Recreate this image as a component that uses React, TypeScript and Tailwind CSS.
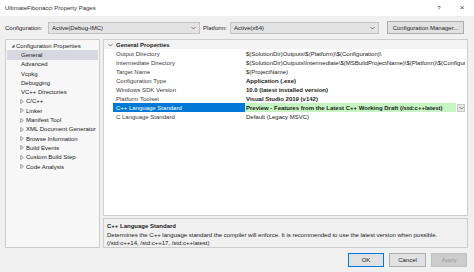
import React from "react";

const Chevron = ({ className = "" }: { className?: string }) => (
  <svg width="5" height="4" viewBox="0 0 5 4" className={className}>
    <path d="M0.5 1 L2.5 3 L4.5 1" stroke="#606060" strokeWidth="0.8" fill="none" />
  </svg>
);

const TriOpen = () => (
  <svg width="4" height="4" viewBox="0 0 4 4">
    <path d="M3.5 0.5 L3.5 3.5 L0.5 3.5 Z" fill="#444" />
  </svg>
);

const TriClosed = () => (
  <svg width="4" height="5" viewBox="0 0 4 5">
    <path d="M0.7 0.5 L3.3 2.5 L0.7 4.5 Z" stroke="#666" strokeWidth="0.6" fill="none" />
  </svg>
);

const treeLeaves = ["General", "Advanced", "Vcpkg", "Debugging", "VC++ Directories"];
const treeNodes = [
  "C/C++",
  "Linker",
  "Manifest Tool",
  "XML Document Generator",
  "Browse Information",
  "Build Events",
  "Custom Build Step",
  "Code Analysis",
];

const props: { label: string; value: string; bold?: boolean; selected?: boolean }[] = [
  { label: "Output Directory", value: "$(SolutionDir)Outputs\\$(Platform)\\$(Configuration)\\" },
  {
    label: "Intermediate Directory",
    value: "$(SolutionDir)Outputs\\Intermediate\\$(MSBuildProjectName)\\$(Platform)\\$(Configuration)\\",
  },
  { label: "Target Name", value: "$(ProjectName)" },
  { label: "Configuration Type", value: "Application (.exe)", bold: true },
  { label: "Windows SDK Version", value: "10.0 (latest installed version)", bold: true },
  { label: "Platform Toolset", value: "Visual Studio 2019 (v142)", bold: true },
  {
    label: "C++ Language Standard",
    value: "Preview - Features from the Latest C++ Working Draft (/std:c++latest)",
    bold: true,
    selected: true,
  },
  { label: "C Language Standard", value: "Default (Legacy MSVC)" },
];

export default function App() {
  return (
    <div className="w-[474px] h-[272px] bg-[#f0f0f0] flex flex-col overflow-hidden font-['Liberation_Sans',sans-serif] text-[6px] leading-none text-[#1b1b1b] whitespace-nowrap">
      {/* Title bar */}
      <div className="h-[16px] bg-white flex items-center pl-[5px] shrink-0">
        <span className="flex-1 text-[#333]">UltimateFibonacci Property Pages</span>
        <span className="w-[24px] text-center text-[#444] text-[6px]">?</span>
        <span className="w-[22px] text-center text-[#444] text-[8px] mr-[1px]">×</span>
      </div>

      {/* Toolbar */}
      <div className="h-[23px] flex items-center pl-[5px] shrink-0">
        <span className="w-[43px] shrink-0">Configuration:</span>
        <div className="w-[152px] h-[12px] shrink-0 bg-[#e3e3e3] border border-[#c4c4c4] flex items-center pl-[3px] pr-[3px]">
          <span className="flex-1">Active(Debug-IMC)</span>
          <Chevron />
        </div>
        <span className="w-[30px] shrink-0 pl-[3px]">Platform:</span>
        <div className="w-[149px] h-[12px] shrink-0 bg-[#e3e3e3] border border-[#c4c4c4] flex items-center pl-[3px] pr-[3px]">
          <span className="flex-1">Active(x64)</span>
          <Chevron />
        </div>
        <div className="ml-[8px] w-[77px] h-[13px] shrink-0 bg-[#e1e1e1] border border-[#adadad] flex items-center justify-center">
          Configuration Manager...
        </div>
      </div>

      {/* Main */}
      <div className="h-[209px] flex gap-[3px] pl-[5px] pr-[6px] shrink-0">
        {/* Tree */}
        <div className="w-[95px] shrink-0 bg-[#f7f7f7] border border-[#cdcdcd] pt-[1px] px-[1px] flex flex-col">
          <div className="h-[9.3px] flex items-center">
            <span className="w-[9px] flex justify-end pr-[1px]">
              <TriOpen />
            </span>
            <span>Configuration Properties</span>
          </div>
          {treeLeaves.map((t, i) => (
            <div
              key={t}
              className={`h-[9.3px] flex items-center pl-[14px] ${i === 0 ? "bg-[#d8d8e0]" : ""}`}
            >
              {t}
            </div>
          ))}
          {treeNodes.map((t) => (
            <div key={t} className="h-[9.3px] flex items-center">
              <span className="w-[19px] flex justify-end pr-[2px]">
                <TriClosed />
              </span>
              <span>{t}</span>
            </div>
          ))}
        </div>

        {/* Right side */}
        <div className="flex-1 min-w-0 flex flex-col gap-[2px]">
          <div className="h-[177px] bg-white border border-[#cdcdcd] flex flex-col overflow-hidden">
            <div className="h-[9px] bg-[#f3f3f3] flex items-center">
              <span className="w-[12px] flex justify-center pl-[1px]">
                <Chevron />
              </span>
              <span className="font-bold">General Properties</span>
            </div>
            {props.map((p) => (
              <div key={p.label} className="h-[9px] flex items-center pl-[9px] pr-[2px]">
                <div
                  className={`w-[132px] h-full flex items-center pl-[3px] shrink-0 ${
                    p.selected ? "bg-[#0078d7] text-white" : "text-[#3a3a3a]"
                  }`}
                >
                  {p.label}
                </div>
                <div
                  className={`flex-1 min-w-0 h-full flex items-center pl-[1px] overflow-hidden ${
                    p.selected ? "bg-[#c5f5c2]" : ""
                  } ${p.bold ? "font-bold" : ""}`}
                >
                  {p.value}
                </div>
                {p.selected && (
                  <div className="w-[8px] h-[8px] ml-[1px] shrink-0 bg-[#e8e8e8] border border-[#c8c8c8] flex items-center justify-center">
                    <Chevron />
                  </div>
                )}
              </div>
            ))}
          </div>
          <div className="h-[30px] bg-[#f0f0f0] border border-[#cdcdcd] pl-[3px] pt-[4px] flex flex-col gap-[2.6px]">
            <span className="font-bold">C++ Language Standard</span>
            <span>
              Determines the C++ language standard the compiler will enforce. It is recommended to use the latest version when possible.
            </span>
            <span>(/std:c++14, /std:c++17, /std:c++latest)</span>
          </div>
        </div>
      </div>

      {/* Buttons */}
      <div className="flex-1 flex justify-end items-start pt-[5px] pr-[7px] gap-[5px]">
        <div className="w-[36px] h-[14px] bg-[#e1e1e1] border border-[#0078d7] flex items-center justify-center">
          OK
        </div>
        <div className="w-[37px] h-[14px] bg-[#e1e1e1] border border-[#adadad] flex items-center justify-center">
          Cancel
        </div>
        <div className="w-[36px] h-[14px] bg-[#cccccc] border border-[#bfbfbf] flex items-center justify-center text-[#9a9a9a]">
          Apply
        </div>
      </div>
    </div>
  );
}
